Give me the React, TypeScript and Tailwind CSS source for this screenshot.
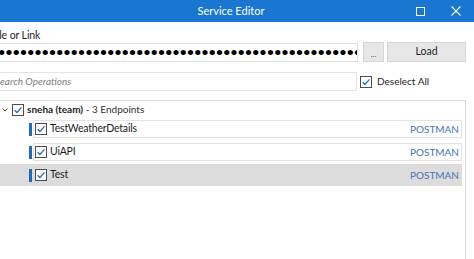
import React from "react";

function Check() {
  return (
    <svg width="12" height="12" viewBox="0 0 12 12" className="shrink-0">
      <rect x="0.5" y="0.5" width="11" height="11" fill="#ffffff" stroke="#4d4d4d" />
      <path d="M2.6 6.2 L4.9 8.5 L9.5 3.4" fill="none" stroke="#1f6fc6" strokeWidth="1.3" />
    </svg>
  );
}

function EndpointRow({ name, selected }: { name: string; selected?: boolean }) {
  return (
    <div className={`flex items-center h-[22px] ${selected ? "bg-[#dcdcdc] -ml-[40px] pl-[40px]" : ""}`}>
      <div className="w-[3px] h-[13px] bg-[#1c6cbd] ml-[38px] mr-[1px]" />
      <div
        className={`flex-1 flex items-center h-[18px] pl-[1px] pr-[2px] border ${
          selected ? "border-transparent" : "border-[#e3e3e3] bg-white"
        }`}
      >
        <Check />
        <span className="ml-[3px] text-[10.5px] tracking-[-0.2px] text-[#1e1e1e]">{name}</span>
        <span className="ml-auto text-[10px] text-[#4673b0]">POSTMAN</span>
      </div>
    </div>
  );
}

export default function App() {
  return (
    <div
      className="w-[474px] h-[259px] overflow-hidden bg-white text-[#1e1e1e]"
      style={{ fontFamily: "'Segoe UI', Lato, 'Noto Sans', sans-serif" }}
    >
      <div className="h-[22px] bg-[#1977d1] relative flex items-center justify-center text-white text-[11px]">
        <span className="ml-[-12px]">Service Editor</span>
        <svg className="absolute left-[416px] top-[7px]" width="9" height="9" viewBox="0 0 9 9">
          <rect x="0.5" y="0.5" width="8" height="8" fill="none" stroke="#ffffff" />
        </svg>
        <svg className="absolute left-[451px] top-[6px]" width="10" height="10" viewBox="0 0 10 10">
          <path d="M0.5 0.5 L9.5 9.5 M9.5 0.5 L0.5 9.5" stroke="#ffffff" strokeWidth="1.1" />
        </svg>
      </div>
      <div className="ml-[-10px] mr-[8px]">
        <div className="h-[20px] flex items-end text-[10.5px] tracking-[-0.1px] leading-[14px] pl-[1px]">File or Link</div>
        <div className="flex items-center h-[20px]">
          <div className="w-[368px] h-[19px] border border-[#e0e0e0] overflow-hidden whitespace-nowrap flex items-center text-[12px] font-bold tracking-[0.3px] leading-none text-black">
            {"•".repeat(80)}
          </div>
          <div className="ml-[5px] w-[21px] h-[20px] bg-[#e6e6e6] border border-[#d6d6d6] flex items-end justify-center pb-[3px] text-[8px] leading-none text-[#555]">
            ...
          </div>
          <div className="ml-[3px] flex-1 h-[20px] bg-[#e6e6e6] border border-[#d6d6d6] flex items-center justify-center text-[10.5px]">
            Load
          </div>
        </div>
        <div className="flex items-center mt-[10px] h-[19px]">
          <div className="w-[367px] h-[19px] border border-[#e3e3e3] flex items-center pl-[4px] text-[10px] italic text-[#7d7d7d]">
            Search Operations
          </div>
          <div className="ml-[3px] flex items-center">
            <Check />
            <span className="ml-[5px] text-[10px]">Deselect All</span>
          </div>
        </div>
        <div className="mt-[9px] h-[200px] border border-[#dcdcdc] pr-[3px]">
          <div className="flex items-center h-[17px]">
            <svg className="ml-[11px]" width="6" height="4" viewBox="0 0 6 4">
              <path d="M0.5 0.5 L3 3 L5.5 0.5" fill="none" stroke="#444" strokeWidth="1" />
            </svg>
            <span className="ml-[4px]"><Check /></span>
            <span className="ml-[3px] text-[10px]">
              <span className="font-bold">sneha (team)</span>
              <span className="text-[#333]"> - 3 Endpoints</span>
            </span>
          </div>
          <div className="flex flex-col gap-[1px]">
            <EndpointRow name="TestWeatherDetails" />
            <EndpointRow name="UiAPI" />
            <EndpointRow name="Test" selected />
          </div>
        </div>
      </div>
    </div>
  );
}
